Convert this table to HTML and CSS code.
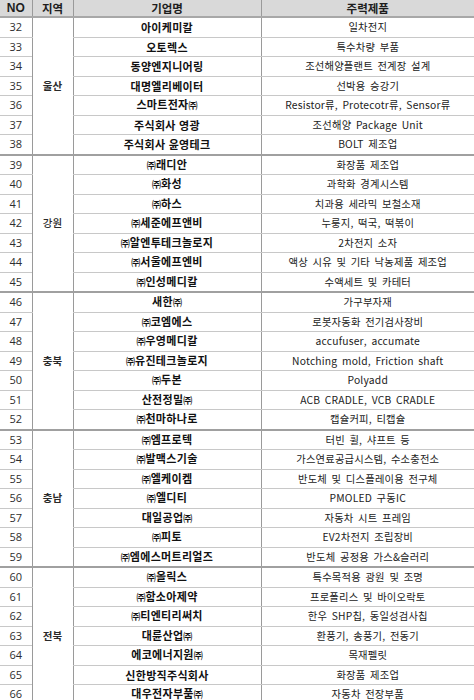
FILE: index.html
```html
<!DOCTYPE html>
<html lang="ko">
<head>
<meta charset="utf-8">
<title>기업 목록</title>
<link rel="stylesheet" href="styles.css">
</head>
<body>
<table class="list">
  <colgroup>
    <col class="c-no"><col class="c-region"><col class="c-name"><col class="c-prod">
  </colgroup>
  <thead>
    <tr><th>NO</th><th>지역</th><th>기업명</th><th>주력제품</th></tr>
  </thead>
  <tbody>
    <tr><td class="no">32</td><td class="region" rowspan="7">울산</td><td class="name">아이케미칼</td><td class="prod">일차전지</td></tr>
    <tr><td class="no">33</td><td class="name">오토렉스</td><td class="prod">특수차량 부품</td></tr>
    <tr><td class="no">34</td><td class="name">동양엔지니어링</td><td class="prod">조선해양플랜트 전계장 설계</td></tr>
    <tr><td class="no">35</td><td class="name">대명엘리베이터</td><td class="prod">선박용 승강기</td></tr>
    <tr><td class="no">36</td><td class="name">스마트전자<span class="ju">㈜</span></td><td class="prod">Resistor류, Protecotr류, Sensor류</td></tr>
    <tr><td class="no">37</td><td class="name">주식회사 영광</td><td class="prod">조선해양 Package Unit</td></tr>
    <tr class="end"><td class="no">38</td><td class="name">주식회사 윤영테크</td><td class="prod">BOLT 제조업</td></tr>

    <tr><td class="no">39</td><td class="region light" rowspan="7">강원</td><td class="name"><span class="ju">㈜</span>래디안</td><td class="prod">화장품 제조업</td></tr>
    <tr><td class="no">40</td><td class="name"><span class="ju">㈜</span>화성</td><td class="prod">과학화 경계시스템</td></tr>
    <tr><td class="no">41</td><td class="name"><span class="ju">㈜</span>하스</td><td class="prod">치과용 세라믹 보철소재</td></tr>
    <tr><td class="no">42</td><td class="name"><span class="ju">㈜</span>세준에프앤비</td><td class="prod">누룽지, 떡국, 떡볶이</td></tr>
    <tr><td class="no">43</td><td class="name"><span class="ju">㈜</span>알엔투테크놀로지</td><td class="prod">2차전지 소자</td></tr>
    <tr><td class="no">44</td><td class="name"><span class="ju">㈜</span>서울에프엔비</td><td class="prod">액상 시유 및 기타 낙농제품 제조업</td></tr>
    <tr class="end"><td class="no">45</td><td class="name"><span class="ju">㈜</span>인성메디칼</td><td class="prod">수액세트 및 카테터</td></tr>

    <tr><td class="no">46</td><td class="region" rowspan="7">충북</td><td class="name">새한<span class="ju">㈜</span></td><td class="prod">가구부자재</td></tr>
    <tr><td class="no">47</td><td class="name"><span class="ju">㈜</span>코엠에스</td><td class="prod">로봇자동화 전기검사장비</td></tr>
    <tr><td class="no">48</td><td class="name"><span class="ju">㈜</span>우영메디칼</td><td class="prod">accufuser, accumate</td></tr>
    <tr><td class="no">49</td><td class="name"><span class="ju">㈜</span>유진테크놀로지</td><td class="prod">Notching mold, Friction shaft</td></tr>
    <tr><td class="no">50</td><td class="name"><span class="ju">㈜</span>두본</td><td class="prod">Polyadd</td></tr>
    <tr><td class="no">51</td><td class="name">산전정밀<span class="ju">㈜</span></td><td class="prod">ACB CRADLE, VCB CRADLE</td></tr>
    <tr class="end"><td class="no">52</td><td class="name"><span class="ju">㈜</span>천마하나로</td><td class="prod">캡슐커피, 티캡슐</td></tr>

    <tr><td class="no">53</td><td class="region" rowspan="7">충남</td><td class="name"><span class="ju">㈜</span>엠프로텍</td><td class="prod">터빈 휠, 샤프트 등</td></tr>
    <tr><td class="no">54</td><td class="name"><span class="ju">㈜</span>발맥스기술</td><td class="prod">가스연료공급시스템, 수소충전소</td></tr>
    <tr><td class="no">55</td><td class="name"><span class="ju">㈜</span>엘케이켐</td><td class="prod">반도체 및 디스플레이용 전구체</td></tr>
    <tr><td class="no">56</td><td class="name"><span class="ju">㈜</span>엘디티</td><td class="prod">PMOLED 구동IC</td></tr>
    <tr><td class="no">57</td><td class="name">대일공업<span class="ju">㈜</span></td><td class="prod">자동차 시트 프레임</td></tr>
    <tr><td class="no">58</td><td class="name"><span class="ju">㈜</span>피토</td><td class="prod">EV2차전지 조립장비</td></tr>
    <tr class="end"><td class="no">59</td><td class="name"><span class="ju">㈜</span>엠에스머트리얼즈</td><td class="prod">반도체 공정용 가스&amp;슬러리</td></tr>

    <tr><td class="no">60</td><td class="region" rowspan="7">전북</td><td class="name"><span class="ju">㈜</span>올릭스</td><td class="prod">특수목적용 광원 및 조명</td></tr>
    <tr><td class="no">61</td><td class="name"><span class="ju">㈜</span>함소아제약</td><td class="prod">프로폴리스 및 바이오락토</td></tr>
    <tr><td class="no">62</td><td class="name"><span class="ju">㈜</span>티엔티리써치</td><td class="prod">한우 SHP칩, 동일성검사칩</td></tr>
    <tr><td class="no">63</td><td class="name">대륜산업<span class="ju">㈜</span></td><td class="prod">환풍기, 송풍기, 전동기</td></tr>
    <tr><td class="no">64</td><td class="name">에코에너지원<span class="ju">㈜</span></td><td class="prod">목재펠릿</td></tr>
    <tr><td class="no">65</td><td class="name">신한방직주식회사</td><td class="prod">화장품 제조업</td></tr>
    <tr class="end"><td class="no">66</td><td class="name">대우전자부품<span class="ju">㈜</span></td><td class="prod">자동차 전장부품</td></tr>
  </tbody>
</table>
</body>
</html>
```

FILE: styles.css
```css
html, body {
  margin: 0;
  padding: 0;
  background: #ffffff;
}

.list {
  width: 474px;
  border-collapse: collapse;
  table-layout: fixed;
  font-family: "Noto Sans CJK KR", "Noto Sans", sans-serif;
  color: #1e1e1e;
}

.c-no { width: 32px; }
.c-region { width: 41px; }
.c-name { width: 188px; }
.c-prod { width: 213px; }

.list th {
  height: 16px;
  padding: 0;
  background: #d9d9d9;
  font-size: 11.5px;
  font-weight: 700;
  line-height: 16px;
  text-align: center;
  border-left: 1px solid #9a9a9a;
  border-bottom: 2px solid #a8a8a8;
}

.list th:first-child {
  border-left: none;
  font-family: "Liberation Sans", "Noto Sans", sans-serif;
  font-size: 12px;
}

.list td {
  height: 18.5px;
  padding: 0;
  text-align: center;
  line-height: 16px;
  border-left: 1px solid #9a9a9a;
  border-bottom: 1px solid #c8c8c8;
  white-space: nowrap;
  overflow: hidden;
}

.list td:first-child {
  border-left: none;
}

.list tr.end td {
  border-bottom: 2px solid #a0a0a0;
}

.list td.region {
  border-bottom: 2px solid #a0a0a0;
  font-size: 10.5px;
  font-weight: 700;
  color: #2a2a2a;
}

.list td.region.light {
  font-weight: 500;
}

.no {
  font-family: "Open Sans", "Noto Sans", sans-serif;
  font-size: 11px;
  color: #2e2e2e;
}

.name {
  font-size: 11px;
  font-weight: 700;
  letter-spacing: 0.3px;
  color: #111111;
}

.prod {
  font-size: 10.3px;
  color: #222222;
  letter-spacing: 0.2px;
  word-spacing: 1.5px;
}

.ju {
  font-size: 9px;
  font-weight: 700;
  letter-spacing: 0;
}
```
